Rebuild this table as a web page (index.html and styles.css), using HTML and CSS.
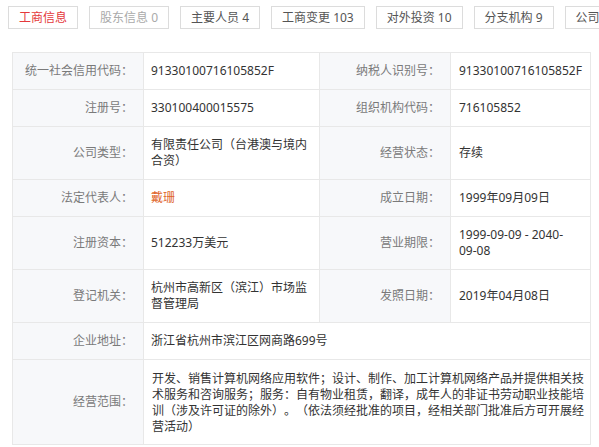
FILE: index.html
```html
<!DOCTYPE html>
<html lang="zh-CN">
<head>
<meta charset="utf-8">
<link rel="stylesheet" href="styles.css">
</head>
<body>
<div class="tabs">
  <span class="tab active">工商信息</span>
  <span class="tab disabled">股东信息 0</span>
  <span class="tab">主要人员 4</span>
  <span class="tab">工商变更 103</span>
  <span class="tab">对外投资 10</span>
  <span class="tab">分支机构 9</span>
  <span class="tab">公司年报 5</span>
</div>
<div class="info">
  <div class="lbl">统一社会信用代码：</div><div class="val">91330100716105852F</div>
  <div class="lbl">纳税人识别号：</div><div class="val">91330100716105852F</div>

  <div class="lbl">注册号：</div><div class="val">330100400015575</div>
  <div class="lbl">组织机构代码：</div><div class="val">716105852</div>

  <div class="lbl">公司类型：</div><div class="val">有限责任公司（台港澳与境内合资）</div>
  <div class="lbl">经营状态：</div><div class="val">存续</div>

  <div class="lbl">法定代表人：</div><div class="val"><span class="person">戴珊</span></div>
  <div class="lbl">成立日期：</div><div class="val">1999年09月09日</div>

  <div class="lbl">注册资本：</div><div class="val">512233万美元</div>
  <div class="lbl">营业期限：</div><div class="val"><p class="txt"><span class="nw">1999-09-09 - 2040-</span> <span class="nw">09-08</span></p></div>

  <div class="lbl">登记机关：</div><div class="val">杭州市高新区（滨江）市场监督管理局</div>
  <div class="lbl">发照日期：</div><div class="val">2019年04月08日</div>

  <div class="lbl">企业地址：</div><div class="val wide">浙江省杭州市滨江区网商路699号</div>

  <div class="lbl">经营范围：</div><div class="val wide cjk">开发、销售计算机网络应用软件；设计、制作、加工计算机网络产品并提供相关技术服务和咨询服务；服务：自有物业租赁，翻译，成年人的非证书劳动职业技能培训（涉及许可证的除外）。（依法须经批准的项目，经相关部门批准后方可开展经营活动）</div>
</div>
</body>
</html>
```

FILE: styles.css
```css
html, body {
  margin: 0;
  padding: 0;
  background: #fff;
  overflow: hidden;
}
body {
  font-family: "Noto Sans", "Noto Sans CJK SC", sans-serif;
  font-size: 12px;
  color: #333;
  width: 599px;
  text-spacing-trim: space-all;
}
.tabs {
  display: flex;
  gap: 11px;
  padding: 6px 0 0 8px;
  white-space: nowrap;
  overflow: hidden;
}
.tab {
  flex: none;
  border: 1px solid #dcdcdc;
  padding: 0 10px;
  line-height: 21px;
  color: #555;
  background: #fff;
}
.tab.active {
  color: #e4393c;
}
.tab.disabled {
  color: #aaa;
}
.info {
  margin: 23px 0 0 12px;
  display: grid;
  grid-template-columns: 131px 176px 131px 140px;
  border-top: 1px solid #e8e8e8;
  border-left: 1px solid #e8e8e8;
  width: max-content;
}
.info > div {
  box-sizing: border-box;
  border-right: 1px solid #e8e8e8;
  border-bottom: 1px solid #e8e8e8;
  padding: 10px 6px 10px 7px;
  line-height: 16px;
  display: flex;
  align-items: center;
}
.info > .lbl {
  background: #f7f8fa;
  color: #7a7a7a;
  justify-content: flex-end;
  text-align: right;
  padding-right: 10px;
}
.info > .val:nth-child(4n) {
  padding-left: 8px;
}
.info > .wide {
  grid-column: span 3;
  padding-left: 7px;
}
.info > .cjk {
  font-family: "Noto Sans CJK SC", sans-serif;
}
.txt {
  margin: 0;
}
.nw {
  white-space: nowrap;
}
.person {
  color: #e0642a;
}
```
